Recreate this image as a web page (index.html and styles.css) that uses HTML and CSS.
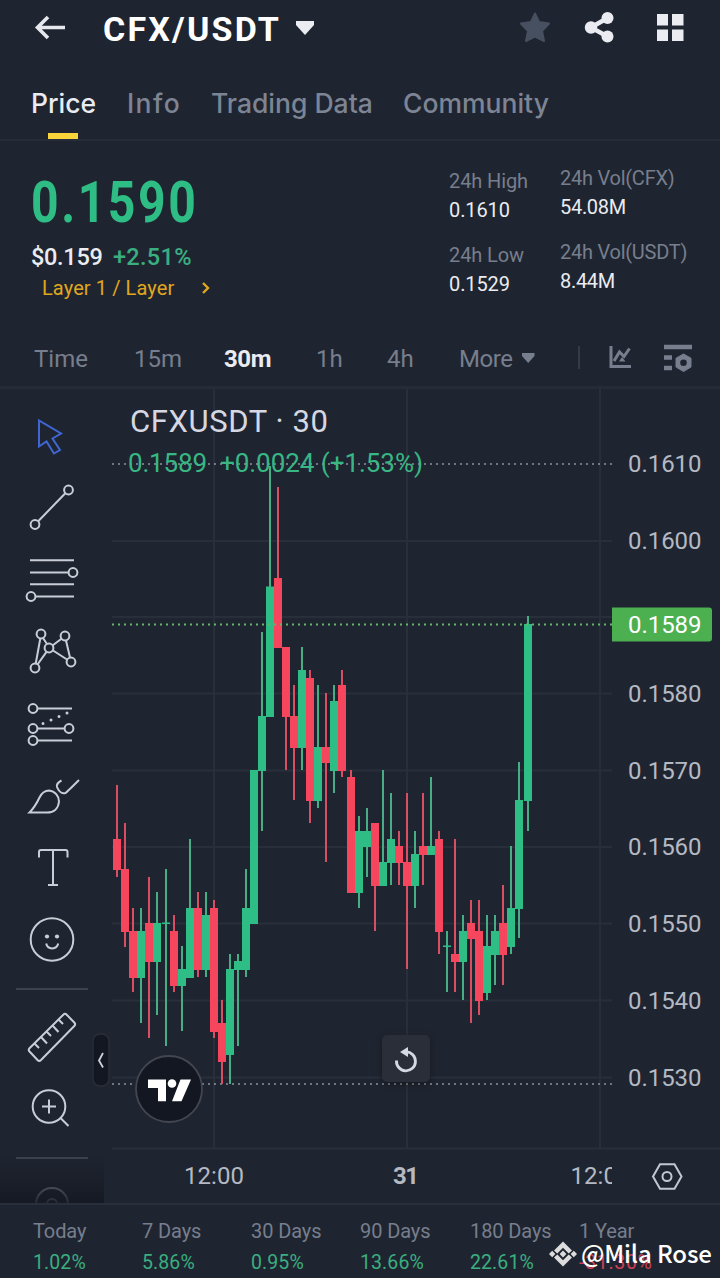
FILE: index.html
```html
<!DOCTYPE html>
<html lang="en">
<head>
<meta charset="utf-8">
<title>CFX/USDT</title>
<link rel="stylesheet" href="styles.css">
</head>
<body>
<div class="app">
  <header class="topbar">
    <svg class="back" width="32" height="26" viewBox="34 15 32 26"><path d="M48 17L37.500 27.500L48 38M37.500 27.500H65" fill="none" stroke="#e6e8ee" stroke-width="3.600"/></svg>
    <h1 class="pair"><span>CFX/USDT</span></h1>
    <svg class="caret" width="18" height="14" viewBox="0 0 18 14"><path d="M0 0H18V4L9 14L0 4Z" fill="#eaecf2"/></svg>
    <svg class="actions" width="170" height="36" viewBox="515 10 170 36">
      <path d="M535 13.500L539 22L549 23.500L542 31L544 41L535 36.500L526 41L528 31L521 23.500L531 22Z" fill="#475060" stroke="#475060" stroke-width="2" stroke-linejoin="round"/>
      <path d="M607.500 18L591 27.500L607.500 36.500" fill="none" stroke="#eaecf2" stroke-width="4.500"/>
      <circle cx="607.500" cy="18" r="6" fill="#eaecf2"/><circle cx="591" cy="27.500" r="6.200" fill="#eaecf2"/><circle cx="607.500" cy="36.500" r="6" fill="#eaecf2"/>
      <path d="M657 14H668V25.500H657ZM672 14H683.500V25.500H672ZM657 29.500H668V41H657ZM672 29.500H683.500V41H672Z" fill="#eaecf2"/>
    </svg>
  </header>
  <nav class="tabs">
    <a class="tab active">Price</a><a class="tab info">Info</a><a class="tab">Trading Data</a><a class="tab">Community</a>
  </nav>
  <section class="summary">
    <div class="quote">
      <div class="last">0.1590</div>
      <div class="change"><span class="usd">$0.159</span><span class="pct">+2.51%</span></div>
      <div class="tag"><span>Layer 1 / Layer</span><svg width="8" height="12" viewBox="0 0 8 12"><path d="M1 1L6 6L1 11" fill="none" stroke="#e0a71e" stroke-width="2.400"/></svg></div>
    </div>
    <dl class="stats first"><dt>24h High</dt><dd>0.1610</dd><dt>24h Low</dt><dd>0.1529</dd></dl>
    <dl class="stats second"><dt>24h Vol(CFX)</dt><dd>54.08M</dd><dt>24h Vol(USDT)</dt><dd>8.44M</dd></dl>
  </section>
  <div class="intervals">
    <span>Time</span><span>15m</span><span class="on">30m</span><span>1h</span><span>4h</span><span class="more">More</span>
    <svg width="174" height="34" viewBox="520 342 174 34">
      <path d="M522 353H534.500V356L528.200 363L522 356Z" fill="#777e8d"/>
      <path d="M579 346V369" stroke="#3b4350" stroke-width="1.500"/>
      <path d="M611 346V366.500H631M614 361L619.500 352L624 356.500L629.500 348.500" fill="none" stroke="#777e8d" stroke-width="3"/>
      <path d="M619 361.500L622 357L625.500 361.500Z" fill="#777e8d"/>
      <path d="M664 347H692M664 357.500H672M664 368H672" stroke="#777e8d" stroke-width="4.500"/>
      <path d="M683.500 354L691 358.200V367L683.500 371.500L676 367V358.200Z" fill="#777e8d" stroke="#777e8d" stroke-width="1"/><circle cx="683.500" cy="362.700" r="3.300" fill="#1f2530"/>
    </svg>
  </div>
  <main class="workspace">
    <aside class="toolbar">
      <svg class="tool" viewBox="0 400 104 72"><path stroke="#3f66d4" stroke-width="2" d="M39 420.500V446.500L46.500 441.500L54 453.500L60 450L52.500 438.500L61 433.500Z"/></svg>
      <svg class="tool" viewBox="0 472 104 72"><circle cx="68.500" cy="490" r="4.400"/><circle cx="35" cy="524.500" r="4.400"/><path d="M38.200 521.200L65.300 493.300"/></svg>
      <svg class="tool" viewBox="0 544 104 72"><path d="M30 560.300H74M30 572.500H68.500M30 584.300H74M35.500 596.500H74"/><circle cx="73" cy="572.500" r="4.400"/><circle cx="31" cy="596.500" r="4.400"/></svg>
      <svg class="tool" viewBox="0 616 104 72"><path d="M40.300 638.500L35.700 663.700M43 638L47 644M37.500 664.500L46.500 651.800M52.500 645.500L61.500 638.700M66 640.500L70 657.500M53 650.500L67 659.500"/><circle cx="41" cy="634" r="4.400"/><circle cx="65" cy="636" r="4.400"/><circle cx="49" cy="648" r="4.400"/><circle cx="35" cy="668" r="4.400"/><circle cx="71" cy="662" r="4.400"/></svg>
      <svg class="tool" viewBox="0 688 104 72"><path d="M37.500 708.500H72M37.500 728.500H64.500M37.500 740.500H72"/><circle cx="33" cy="708.500" r="4.400"/><circle cx="33" cy="728.500" r="4.400"/><circle cx="69" cy="728.500" r="4.400"/><circle cx="33" cy="740.500" r="4.400"/><path stroke-width="3" stroke-linecap="round" d="M43 723.500h.01M51 720h.01M59 716.500h.01M67 713h.01"/></svg>
      <svg class="tool" viewBox="0 760 104 72"><path d="M29.500 812.500Q35 807 39.500 797.500Q43 790.500 49 790.500C55 791 59 796 59 801.500C58.500 808 54.500 812.500 47 812.500ZM61.500 780.500Q56 783.500 57 787Q60 794.500 65.500 793Q67 792 79 780"/></svg>
      <svg class="tool" viewBox="0 832 104 72"><path d="M39 857.500V852Q39 850 41 850H65.500Q67.500 850 67.500 852V857.500M53 850V885M48 885H58"/></svg>
      <svg class="tool" viewBox="0 904 104 72"><circle cx="52" cy="939.500" r="21.300"/><circle cx="47" cy="936.500" r="2.100" class="dot"/><circle cx="57" cy="936.500" r="2.100" class="dot"/><path d="M46.200 943.500C47.500 950 56.800 950 58.200 943.500"/></svg>
      <div class="rule"></div>
      <svg class="tool" viewBox="0 1001 104 72"><path stroke-linejoin="round" d="M63.300 1014.700Q65 1013 66.700 1014.700L74.300 1022.500Q76 1024.300 74.300 1026L41 1060Q39.200 1061.700 37.500 1060L29.500 1051.500Q28 1050 29.500 1048.200Z"/><path d="M34.500 1043.500L39 1048M41 1037L47 1043.500M46.500 1031.500L51 1036M52.500 1025.500L58.500 1032M58.500 1019.500L63 1024"/></svg>
      <svg class="tool" viewBox="0 1073 104 72"><circle cx="49" cy="1106.500" r="16.300"/><path d="M42 1106.500H56M49 1099.500V1113.500M60.500 1118L68.500 1126"/></svg>
      <div class="rule low"></div>
      <svg class="tool faded" viewBox="0 1171 104 33"><circle cx="52" cy="1204" r="16"/><circle cx="52" cy="1204" r="5"/></svg>
      <div class="fade"></div>
    </aside>
    <svg class="chart" viewBox="92 389 628 815">
      <path class="grid" d="M112 541H612M112 617H612M112 693.500H612M112 770.500H612M112 847H612M112 923.500H612M112 1000.500H612M112 1077.500H612M214 389V1148M407 389V1148M600 389V1148M112 1148.500H720"/>
      <path class="dots" d="M112 464H612M112 1084H612"/>
      <path class="wick up" d="M141 908V1023M157 892V1015M166 869V1046M182 946V1031M190 839V978M206 892V977M230 954V1084M238 954V1046M246 869V977M262 632V831M270 466V717M302 647V770M318 685V808M334 685V793M359 816V908M367 808V877M383 770V886M391 793V885M415 831V908M431 777V855M447 931V992M463 915V1000M487 915V1000M495 915V985M511 846V954M519 762V938M528 616V831"/>
      <path class="wick down" d="M117 785V877M125 823V947M133 908V992M149 877V1038M174 915V992M198 892V977M214 900V1038M222 1000V1084M278 487V648M286 647V770M294 685V800M310 670V823M326 693V862M342 670V777M351 770V893M375 823V931M399 831V885M407 793V969M423 793V885M439 831V954M455 839V992M471 900V1023M479 900V1015M503 885V985"/>
      <path class="body up" d="M141 931V978M157 923V962M166 922.500V924M182 969V986M190 908V978M206 915V970M230 969V1055M238 961V970M246 908V970M254 770V924M262 716V771M270 586.500V717M302 670V748M318 747V801M334 701V771M359 831V893M367 831V847M383 862V886M391 839V863M415 854V886M431 846V855M447 945.500V947M463 931V962M487 946V993M495 931V955M511 908V947M519 800V909M528 624V801"/>
      <path class="body down" d="M117 839V870M125 869V932M133 931V978M149 923V962M174 931V986M198 908V970M214 908V1032M222 1023V1062M278 578V648M286 647V717M294 716V748M310 678V801M326 747V763M342 685V771M351 777V893M375 823V886M399 846V863M407 862V886M423 846V855M439 839V932M455 954V962M471 923V939M479 931V1001M503 923V955"/>
      <path class="dots last-line" d="M112 624.500H612"/>
      <text class="symbol" x="130" y="432" textLength="198">CFXUSDT · 30</text>
      <text class="delta" x="128" y="472" textLength="79">0.1589</text>
      <text class="delta" x="220" y="472" textLength="203">+0.0024 (+1.53%)</text>
      <g class="axis">
        <text x="628" y="472" textLength="73.500">0.1610</text><text x="628" y="549" textLength="73.500">0.1600</text>
        <text x="628" y="702" textLength="73.500">0.1580</text><text x="628" y="779" textLength="73.500">0.1570</text>
        <text x="628" y="855" textLength="73.500">0.1560</text><text x="628" y="932" textLength="73.500">0.1550</text>
        <text x="628" y="1009" textLength="73.500">0.1540</text><text x="628" y="1086" textLength="73.500">0.1530</text>
        <text x="184" y="1184" textLength="60">12:00</text><text x="393" y="1184" textLength="26" class="strong">31</text>
        <svg x="560" y="1150" width="52" height="50"><text x="10.500" y="34" textLength="60">12:00</text></svg>
      </g>
      <path d="M612 607.500H709Q712 607.500 712 610.500V638.500Q712 641.500 709 641.500H612Z" fill="#4caf50"/>
      <text class="last-price" x="628" y="633" textLength="73.500">0.1589</text>
      <path d="M653 1176.500L660 1164.200H674.500L681.500 1176.500L674.500 1188.800H660Z" fill="none" stroke="#c3c7d1" stroke-width="2"/><circle cx="667" cy="1176.500" r="4.500" fill="none" stroke="#c3c7d1" stroke-width="2"/>
      <rect x="93" y="1034" width="16" height="52" rx="7" fill="#131722" stroke="#292e39" stroke-width="1.500"/><path d="M103 1053L99 1060.500L103 1067.500" fill="none" stroke="#ced2db" stroke-width="1.800"/>
      <circle cx="169" cy="1089" r="33" fill="#131722" stroke="#434651" stroke-width="1.800"/>
      <path d="M148 1079.500H166V1101.300H158V1088H148ZM180.500 1079.500H191L181.500 1101.300H172Z" fill="#fff"/><circle cx="172" cy="1083.500" r="4.300" fill="#fff"/>
      <g class="reset"><rect x="382" y="1035" width="48" height="47" rx="5" fill="#2a2e39"/><path d="M396.500 1060.500A9.500 9.500 0 1 0 406 1051.800" fill="none" stroke="#d5d9e3" stroke-width="2.800"/><path d="M400 1052L408 1047V1057Z" fill="#d5d9e3"/></g>
    </svg>
  </main>
  <footer class="periods">
    <div><span>Today</span><b>1.02%</b></div><div><span>7 Days</span><b>5.86%</b></div><div><span>30 Days</span><b>0.95%</b></div><div><span>90 Days</span><b>13.66%</b></div><div><span>180 Days</span><b>22.61%</b></div><div><span>1 Year</span><b class="neg">-31.30%</b></div>
    <div class="watermark"><svg width="28" height="28" viewBox="0 0 28 28"><path d="M5 10.500L14 1.500L23 10.500L19.700 13.500L14 7.800L8.300 13.500ZM5 17.500L14 26.500L23 17.500L19.700 14.500L14 20.200L8.300 14.500ZM0 14L3.200 10.800L6.400 14L3.200 17.200ZM21.600 14L24.800 10.800L28 14L24.800 17.200ZM10.600 14L14 10.600L17.400 14L14 17.400Z" fill="#dcdcdc"/></svg><span>@Mila Rose</span></div>
  </footer>
</div>
</body>
</html>
```
FILE: styles.css
```css
* { box-sizing: border-box; }
body { margin: 0; background: #1f2530; font-family: Roboto, sans-serif; color: #eaecf2; }
svg { display: block; }
.app { width: 720px; height: 1278px; overflow: hidden; }

.topbar { display: flex; align-items: center; height: 56px; padding-left: 34px; }
.pair { margin: 2px 0 0 37px; width: 176px; font-size: 34px; line-height: 40px; font-weight: 700; letter-spacing: 2.2px; color: #fff; white-space: nowrap; }
.caret { margin-left: 17px; }
.actions { margin-left: auto; margin-right: 35px; }

.tabs { display: grid; grid-template-columns: 96px 84px 192px 1fr; height: 85px; padding: 29px 0 0 31px; border-bottom: 2px solid #272d38; }
.tab { font: 500 26.500px/36px Inter, sans-serif; color: #7d8494; white-space: nowrap; letter-spacing: 0; }
.tab.info { letter-spacing: 1.4px; }
.tab.active { color: #eaecf2; }
.tab.active::after { content: ""; display: block; width: 30px; height: 6px; margin: 12px 0 0 17px; background: #f8d33a; }

.summary { display: grid; grid-template-columns: 418px 111px 1fr; height: 191px; padding-left: 31px; }
.last { height: 66px; margin-top: 29px; font-size: 57px; line-height: 66px; font-weight: 700; letter-spacing: 3px; color: #2ebd85; transform: scaleX(.845); transform-origin: 0 0; }
.change { display: flex; margin-top: 5px; font-size: 23.500px; line-height: 32px; font-weight: 500; letter-spacing: -.3px; }
.usd { width: 82px; }
.pct { color: #3aae80; letter-spacing: .3px; }
.tag { display: flex; align-items: center; margin: 1px 0 0 11px; font-size: 20px; line-height: 28px; letter-spacing: .1px; color: #e0a71e; }
.tag span { width: 160px; }
.stats { margin: 0; padding-top: 26px; font-size: 20px; white-space: nowrap; }
.stats.second { padding-top: 23px; }
.stats dt { height: 29px; line-height: 29px; color: #777e8d; letter-spacing: -.1px; }
.stats.second dt { letter-spacing: -.25px; }
.stats dd { height: 29px; line-height: 29px; margin: 0 0 16px; color: #eaecf2; letter-spacing: -.1px; }
.stats.second dd { letter-spacing: -.3px; }

.intervals { display: grid; grid-template-columns: 100px 90px 92px 71px 72px 61px 174px; height: 57px; padding: 0 0 0 34px; align-items: center; border-bottom: 3px solid #262c37; font-size: 24px; line-height: 32px; letter-spacing: 0; color: #777e8d; }
.intervals .on { color: #eaecf2; font-weight: 700; letter-spacing: -.4px; }
.intervals .more { letter-spacing: -.4px; }

.workspace { display: flex; height: 815px; }
.toolbar { position: relative; flex: 0 0 92px; min-width: 0; height: 815px; padding-top: 11px; }
.tool { width: 104px; height: 72px; fill: none; stroke: #c9cdd7; stroke-width: 2; }
.tool .dot { fill: #c9cdd7; stroke: none; }
.rule { width: 72px; height: 2px; margin: 12px 0 11px 16px; background: #3c434f; }
.rule.low { margin: 12px 0 12px 16px; }
.tool.faded { height: 33px; overflow: hidden; opacity: .6; }
.fade { position: absolute; left: 0; bottom: 0; width: 104px; height: 48px; background: linear-gradient(rgba(19,23,34,0), rgba(19,23,34,.85)); }
.chart { flex: 0 0 628px; height: 815px; position: relative; }
.grid { stroke: #292f3a; stroke-width: 2; fill: none; }
.dots { stroke: #8d929d; stroke-width: 1.5; stroke-dasharray: 2 4; fill: none; }
.last-line { stroke: #66b36c; stroke-width: 2; }
.wick { stroke-width: 2; }
.body { stroke-width: 8; }
.up { stroke: #2ebd85; fill: none; }
.down { stroke: #f6465d; fill: none; }
.wick.up { stroke: #46ad85; }
.wick.down { stroke: #d94e62; }
.symbol { font-size: 31px; fill: #d5d8e2; }
.delta { font-size: 26px; fill: #38b785; }
.axis { font-size: 24px; fill: #b5b9c3; }
.strong { font-weight: 700; }
.last-price { font-size: 24px; fill: #fff; }
.reset { filter: drop-shadow(0 2px 3px rgba(0,0,0,.4)); }

.periods { position: relative; display: grid; grid-template-columns: 109px 109px 109px 110px 109px 1fr; height: 75px; margin-top: -1px; padding: 13px 0 0 33px; border-top: 2px solid #2a303b; }
.periods span { display: block; height: 26px; font-size: 20px; line-height: 26px; letter-spacing: -.1px; color: #777e8d; white-space: nowrap; }
.periods b { display: block; margin-top: 6px; font-size: 19.500px; line-height: 26px; font-weight: 400; color: #3aae80; letter-spacing: .1px; }
.periods .neg { color: #ce3f55; letter-spacing: .7px; }
.watermark { position: absolute; left: 549px; top: 33px; display: flex; align-items: center; gap: 4px; }
.periods .watermark svg { margin-top: 0; }
.periods .watermark span { height: 34px; margin-top: -2px; font: 500 24px/34px "Noto Sans CJK SC", sans-serif; color: #fff; }
```
